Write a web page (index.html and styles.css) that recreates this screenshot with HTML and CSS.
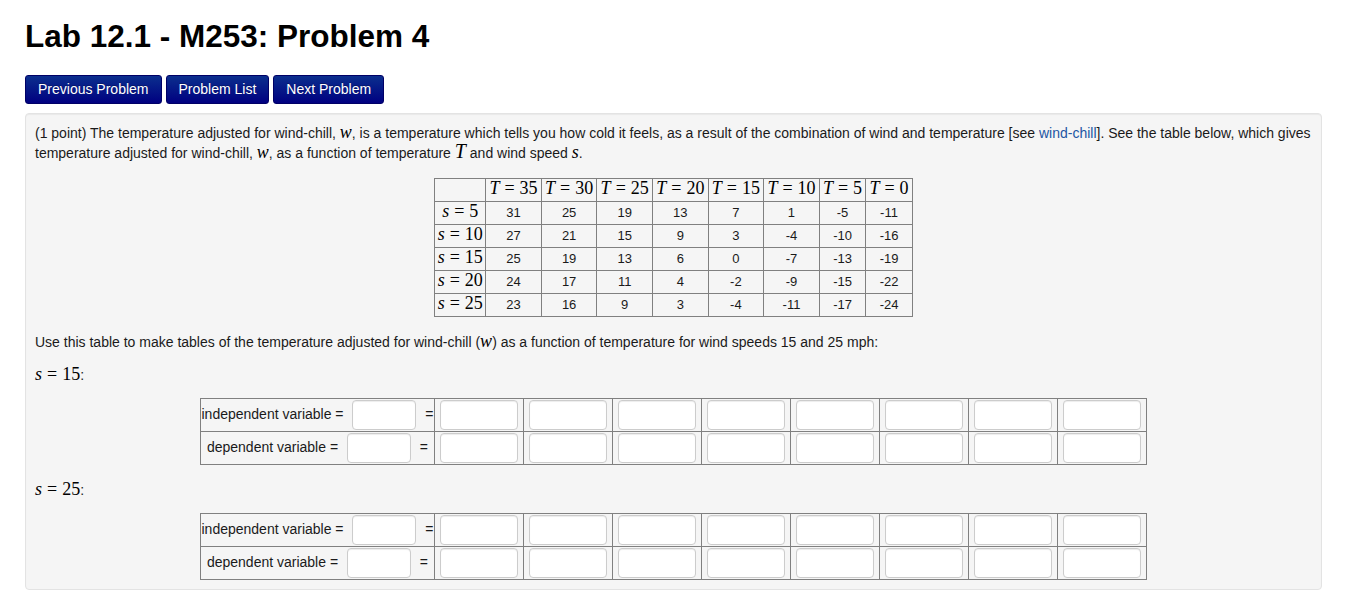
FILE: index.html
```html
<!DOCTYPE html>
<html>
<head>
<meta charset="utf-8">
<title>Lab 12.1 - M253: Problem 4</title>
<link rel="stylesheet" href="styles.css">
</head>
<body>
<div class="page">
  <h1 class="title">Lab 12.1 - M253: Problem 4</h1>
  <div class="nav">
    <a class="btn">Previous Problem</a>
    <a class="btn">Problem List</a>
    <a class="btn">Next Problem</a>
  </div>
  <div class="well">
    <p class="intro">(1 point) The temperature adjusted for wind-chill, <span class="m"><i>w</i></span>, is a temperature which tells you how cold it feels, as a result of the combination of wind and temperature [see <a class="link">wind-chill</a>]. See the table below, which gives<br>temperature adjusted for wind-chill, <span class="m"><i>w</i></span>, as a function of temperature <span class="m big"><i>T</i></span> and wind speed <span class="m"><i>s</i></span>.</p>

    <table class="data">
      <tr>
        <th class="c-lab"></th>
        <th class="c-w"><span class="m"><i>T</i><span class="eq">=</span>35</span></th>
        <th class="c-w"><span class="m"><i>T</i><span class="eq">=</span>30</span></th>
        <th class="c-w"><span class="m"><i>T</i><span class="eq">=</span>25</span></th>
        <th class="c-w"><span class="m"><i>T</i><span class="eq">=</span>20</span></th>
        <th class="c-w"><span class="m"><i>T</i><span class="eq">=</span>15</span></th>
        <th class="c-w"><span class="m"><i>T</i><span class="eq">=</span>10</span></th>
        <th class="c-n"><span class="m"><i>T</i><span class="eq">=</span>5</span></th>
        <th class="c-n"><span class="m"><i>T</i><span class="eq">=</span>0</span></th>
      </tr>
      <tr><th><span class="m"><i>s</i><span class="eq">=</span>5</span></th><td>31</td><td>25</td><td>19</td><td>13</td><td>7</td><td>1</td><td>-5</td><td>-11</td></tr>
      <tr><th><span class="m"><i>s</i><span class="eq">=</span>10</span></th><td>27</td><td>21</td><td>15</td><td>9</td><td>3</td><td>-4</td><td>-10</td><td>-16</td></tr>
      <tr><th><span class="m"><i>s</i><span class="eq">=</span>15</span></th><td>25</td><td>19</td><td>13</td><td>6</td><td>0</td><td>-7</td><td>-13</td><td>-19</td></tr>
      <tr><th><span class="m"><i>s</i><span class="eq">=</span>20</span></th><td>24</td><td>17</td><td>11</td><td>4</td><td>-2</td><td>-9</td><td>-15</td><td>-22</td></tr>
      <tr><th><span class="m"><i>s</i><span class="eq">=</span>25</span></th><td>23</td><td>16</td><td>9</td><td>3</td><td>-4</td><td>-11</td><td>-17</td><td>-24</td></tr>
    </table>

    <p class="use">Use this table to make tables of the temperature adjusted for wind-chill (<span class="m"><i>w</i></span>) as a function of temperature for wind speeds 15 and 25 mph:</p>

    <p class="sline"><span class="m"><i>s</i><span class="eq">=</span>15</span>:</p>

    <table class="ans">
      <tr>
        <td class="lab">independent variable = <input class="in-lab" type="text"> =</td>
        <td><input class="in" type="text"></td><td><input class="in" type="text"></td><td><input class="in" type="text"></td><td><input class="in" type="text"></td>
        <td><input class="in" type="text"></td><td><input class="in" type="text"></td><td><input class="in" type="text"></td><td><input class="in" type="text"></td>
      </tr>
      <tr>
        <td class="lab">dependent variable = <input class="in-lab" type="text"> =</td>
        <td><input class="in" type="text"></td><td><input class="in" type="text"></td><td><input class="in" type="text"></td><td><input class="in" type="text"></td>
        <td><input class="in" type="text"></td><td><input class="in" type="text"></td><td><input class="in" type="text"></td><td><input class="in" type="text"></td>
      </tr>
    </table>

    <p class="sline sline-after">
      <span class="m"><i>s</i><span class="eq">=</span>25</span>:</p>

    <table class="ans">
      <tr>
        <td class="lab">independent variable = <input class="in-lab" type="text"> =</td>
        <td><input class="in" type="text"></td><td><input class="in" type="text"></td><td><input class="in" type="text"></td><td><input class="in" type="text"></td>
        <td><input class="in" type="text"></td><td><input class="in" type="text"></td><td><input class="in" type="text"></td><td><input class="in" type="text"></td>
      </tr>
      <tr>
        <td class="lab">dependent variable = <input class="in-lab" type="text"> =</td>
        <td><input class="in" type="text"></td><td><input class="in" type="text"></td><td><input class="in" type="text"></td><td><input class="in" type="text"></td>
        <td><input class="in" type="text"></td><td><input class="in" type="text"></td><td><input class="in" type="text"></td><td><input class="in" type="text"></td>
      </tr>
    </table>
  </div>
</div>
</body>
</html>
```

FILE: styles.css
```css
html, body {
  margin: 0;
  padding: 0;
  background: #ffffff;
}
body {
  font-family: "Liberation Sans", Arial, sans-serif;
  font-size: 14px;
  line-height: 20px;
  color: #1a1a1a;
}
.page {
  padding: 0 0 0 25px;
  width: 1297px;
}
.title {
  margin: 0;
  padding-top: 16px;
  font-size: 31.5px;
  line-height: 40px;
  font-weight: bold;
  color: #000;
}
.nav {
  display: flex;
  gap: 4px;
  margin-top: 19px;
}
.btn {
  display: block;
  padding: 4px 12px;
  font-size: 14px;
  line-height: 19px;
  color: #fff;
  border-radius: 3px;
  border: 1px solid #000066;
  background: linear-gradient(to bottom, #0b2f8e, #000080);
  text-shadow: 0 -1px 0 rgba(0,0,0,0.25);
}
.well {
  margin-top: 9px;
  background: #f5f5f5;
  border: 1px solid #e3e3e3;
  border-radius: 4px;
  padding: 9px 9px 9px 9px;
  box-shadow: inset 0 1px 1px rgba(0,0,0,0.05);
}
.intro {
  margin: 0;
}
.link {
  color: #2255a4;
}
.m {
  font-family: "Liberation Serif", "Times New Roman", serif;
  font-size: 18px;
  line-height: 12px;
  color: #000;
  white-space: nowrap;
}
.m i {
  font-style: italic;
}
.m.big {
  font-size: 20px;
}
.eq {
  display: inline-block;
  margin: 0 5px;
  font-style: normal;
}
.data {
  border-collapse: collapse;
  margin: 15px auto 0 auto;
  border: 1px solid #808080;
}
.data th, .data td {
  border: 1px solid #808080;
  padding: 0;
  height: 22px;
  text-align: center;
  font-weight: normal;
  font-size: 13px;
  line-height: 16px;
}
.c-lab { width: 50px; }
.c-w { width: 54.6px; }
.c-n { width: 45.5px; }
.use {
  margin: 15px 0 0 0;
}
.sline {
  margin: 13px 0 0 0;
}
.sline-after {
  margin-top: 15px;
}
.ans {
  border-collapse: collapse;
  margin: 13px auto 0 auto;
  border: 1px solid #808080;
}
.ans td {
  border: 1px solid #808080;
  padding: 1px 5px;
  text-align: center;
}
.ans td.lab {
  width: 233px;
  padding: 1px 0;
  white-space: nowrap;
}
input {
  font-family: inherit;
  font-size: 14px;
  height: 30px;
  box-sizing: border-box;
  border: 1px solid #cccccc;
  border-radius: 4px;
  background: #fff;
  box-shadow: inset 0 1px 1px rgba(0,0,0,0.075);
  vertical-align: middle;
  margin: 0;
  padding: 4px 6px;
}
.in {
  width: 78px;
  display: block;
}
.in-lab {
  width: 64px;
  margin: 0 5px;
}
```
